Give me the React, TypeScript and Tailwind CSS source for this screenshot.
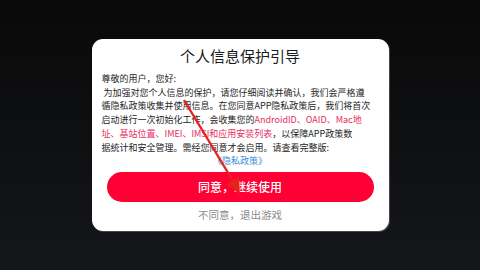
import React from 'react';

const FONT = { fontFamily: '"Noto Sans CJK SC", "Noto Sans", sans-serif' };

const Red: React.FC<{ children: React.ReactNode }> = ({ children }) => (
  <span className="text-[#e62c5e]">{children}</span>
);

const PrivacyDialog: React.FC = () => {
  return (
    <div className="w-[297px] h-[192px] bg-white rounded-[11px] shadow-[1px_1px_0_#444] flex flex-col pt-[7px]">
      <h1 className="text-center text-[15px] leading-[20px] text-[#1a1a1a]">个人信息保护引导</h1>
      <div className="mt-[6px] pl-[10px] text-[9px] leading-[13.7px] text-[#262626] whitespace-pre">
        <div>尊敬的用户，您好:</div>
        <div> 为加强对您个人信息的保护，请您仔细阅读并确认，我们会严格遵</div>
        <div>循隐私政策收集并使用信息。在您同意APP隐私政策后，我们将首次</div>
        <div>
          启动进行一次初始化工作，会收集您的<Red>AndroidID、OAID、Mac地</Red>
        </div>
        <div>
          <Red>址、基站位置、IMEI、IMSI和应用安装列表</Red>，以保障APP政策数
        </div>
        <div>据统计和安全管理。需经您同意才会启用。请查看完整版:</div>
      </div>
      <div className="text-center text-[9px] leading-[13.7px] text-[#3a8ed6]">《隐私政策》</div>
      <button className="mt-[4px] mx-[15px] h-[30px] rounded-full bg-[#fe0034] text-white text-[12px] font-medium">
        同意，继续使用
      </button>
      <div className="mt-[6px] text-center text-[10.5px] leading-[14px] text-[#8a8a8a]">不同意，退出游戏</div>
    </div>
  );
};

// red annotation arrow drawn over the dialog
const Arrow: React.FC = () => (
  <svg className="absolute inset-0 pointer-events-none" width="480" height="270" viewBox="0 0 480 270">
    <line x1="184" y1="100" x2="233" y2="181" stroke="#e8201e" strokeWidth="2.4" />
    <polygon points="240,194 239,176.5 226.5,184.5" fill="#e8201e" />
  </svg>
);

export default function App() {
  return (
    <div
      className="relative w-[480px] h-[270px] overflow-hidden bg-gradient-to-b from-[#090909] to-[#14161a] flex items-center justify-center"
      style={FONT}
    >
      <PrivacyDialog />
      <Arrow />
    </div>
  );
}
